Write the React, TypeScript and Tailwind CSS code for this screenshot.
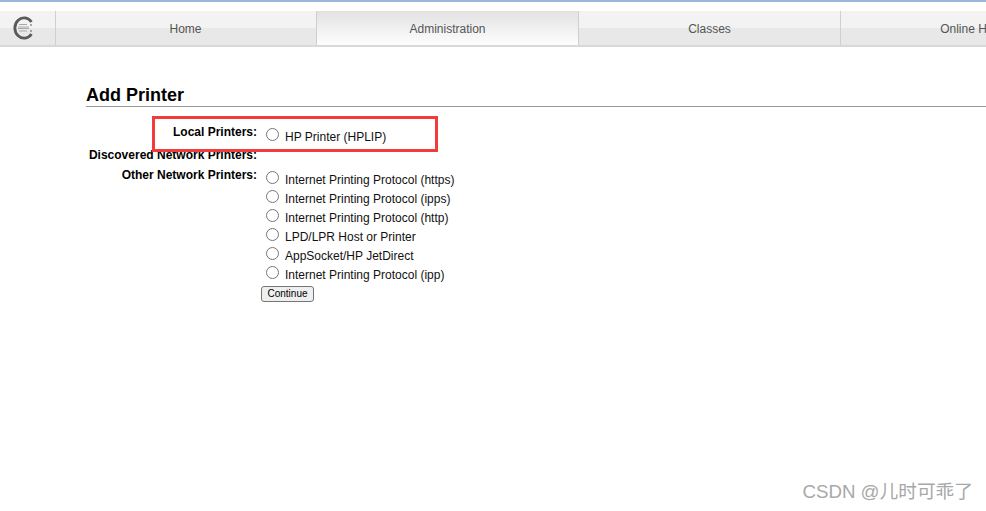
import React from "react";

const FONT = "font-['Liberation_Sans',Arial,sans-serif]";

const TABS = ["Home", "Administration", "Classes", "Online Help"];

const OTHER_PRINTERS = [
  "Internet Printing Protocol (https)",
  "Internet Printing Protocol (ipps)",
  "Internet Printing Protocol (http)",
  "LPD/LPR Host or Printer",
  "AppSocket/HP JetDirect",
  "Internet Printing Protocol (ipp)",
];

const Logo: React.FC = () => (
  <svg width="22" height="24" viewBox="0 0 22 24" fill="none">
    <path d="M19.5 6A9.2 10.2 0 1 0 19.5 18" stroke="#5a5a5a" strokeWidth="2.8" />
    <path d="M19 9.5v-1M19 15.5v-1" stroke="#5a5a5a" strokeWidth="2" />
    <path d="M7 8.5h8M6 11h11M6 12.5h11M7 15h8" stroke="#a8a8a8" strokeWidth="1" />
  </svg>
);

const PrinterOption: React.FC<{ label: string }> = ({ label }) => (
  <label className="flex h-[19px] items-center">
    <input type="radio" name="printer" className="ml-[9px] mt-[-4px] h-[13px] w-[13px]" />
    <span className="ml-[6px] mt-[2px] text-[12px] leading-[19px] text-[#111]">{label}</span>
  </label>
);

const tabClass = (tab: string): string => {
  if (tab === "Administration") {
    return "mb-[-2px] flex h-[36px] w-[262px] shrink-0 items-center justify-center border-r border-[#cfcfcf] bg-[linear-gradient(#e2e2e2,#ffffff)] text-[12px] text-[#555]";
  }
  if (tab === "Home") {
    return "flex w-[261px] shrink-0 items-center justify-center border-r border-[#cfcfcf] bg-[linear-gradient(#f3f3f3_50%,#e8e8e8_50%)] pr-[1px] pt-[2px] text-[12px] text-[#555]";
  }
  return "flex w-[262px] shrink-0 items-center justify-center border-r border-[#cfcfcf] bg-[linear-gradient(#f3f3f3_50%,#e8e8e8_50%)] pt-[2px] text-[12px] text-[#555]";
};

const App: React.FC = () => {
  return (
    <div className={`relative h-[511px] w-[986px] overflow-hidden bg-white ${FONT}`}>
      <div className="h-[2px] bg-[#9db5d8]" />

      <nav className="mt-[9px] flex h-[36px] overflow-hidden border-b-2 border-[#d8d8d8]">
        <div className="flex w-[56px] shrink-0 items-center justify-center border-r border-[#cfcfcf] bg-[linear-gradient(#f3f3f3_50%,#e8e8e8_50%)] pr-[9px]">
          <Logo />
        </div>
        {TABS.map((tab) => (
          <div key={tab} className={tabClass(tab)}>
            {tab}
          </div>
        ))}
      </nav>

      <main className="ml-[86px] mt-[38px]">
        <h1 className="border-b border-[#999] text-[18px] font-bold leading-[21px] text-black">
          Add Printer
        </h1>

        <div className="mt-[16px] grid grid-cols-[171px_1fr] text-[12px]">
          <div className="h-[23px] text-right font-bold leading-[19px] text-black">Local Printers:</div>
          <div className="h-[23px] pt-[4px]">
            <PrinterOption label="HP Printer (HPLIP)" />
          </div>

          <div className="h-[19px] whitespace-nowrap text-right font-bold leading-[19px] text-black">
            Discovered Network Printers:
          </div>
          <div className="h-[19px]" />

          <div className="whitespace-nowrap pt-[1px] text-right font-bold leading-[19px] text-black">
            Other Network Printers:
          </div>
          <div className="pt-[5px]">
            {OTHER_PRINTERS.map((printer) => (
              <PrinterOption key={printer} label={printer} />
            ))}
            <button
              type="button"
              className="ml-[4px] mt-[2px] block h-[16px] w-[53px] rounded-[3px] border border-[#767676] bg-[#efefef] text-[10px] leading-[14px] text-black"
            >
              Continue
            </button>
          </div>
        </div>
      </main>

      <div className="absolute left-[152px] top-[116px] h-[36px] w-[286px] border-[3px] border-[#f23c3c]" />

      <div className="absolute right-[13px] top-[481px] font-['Liberation_Sans','Noto_Sans_CJK_SC',sans-serif] text-[18.7px] leading-[22px] text-[#a8a8a8]">
        CSDN @儿时可乖了
      </div>
    </div>
  );
};

export default App;
